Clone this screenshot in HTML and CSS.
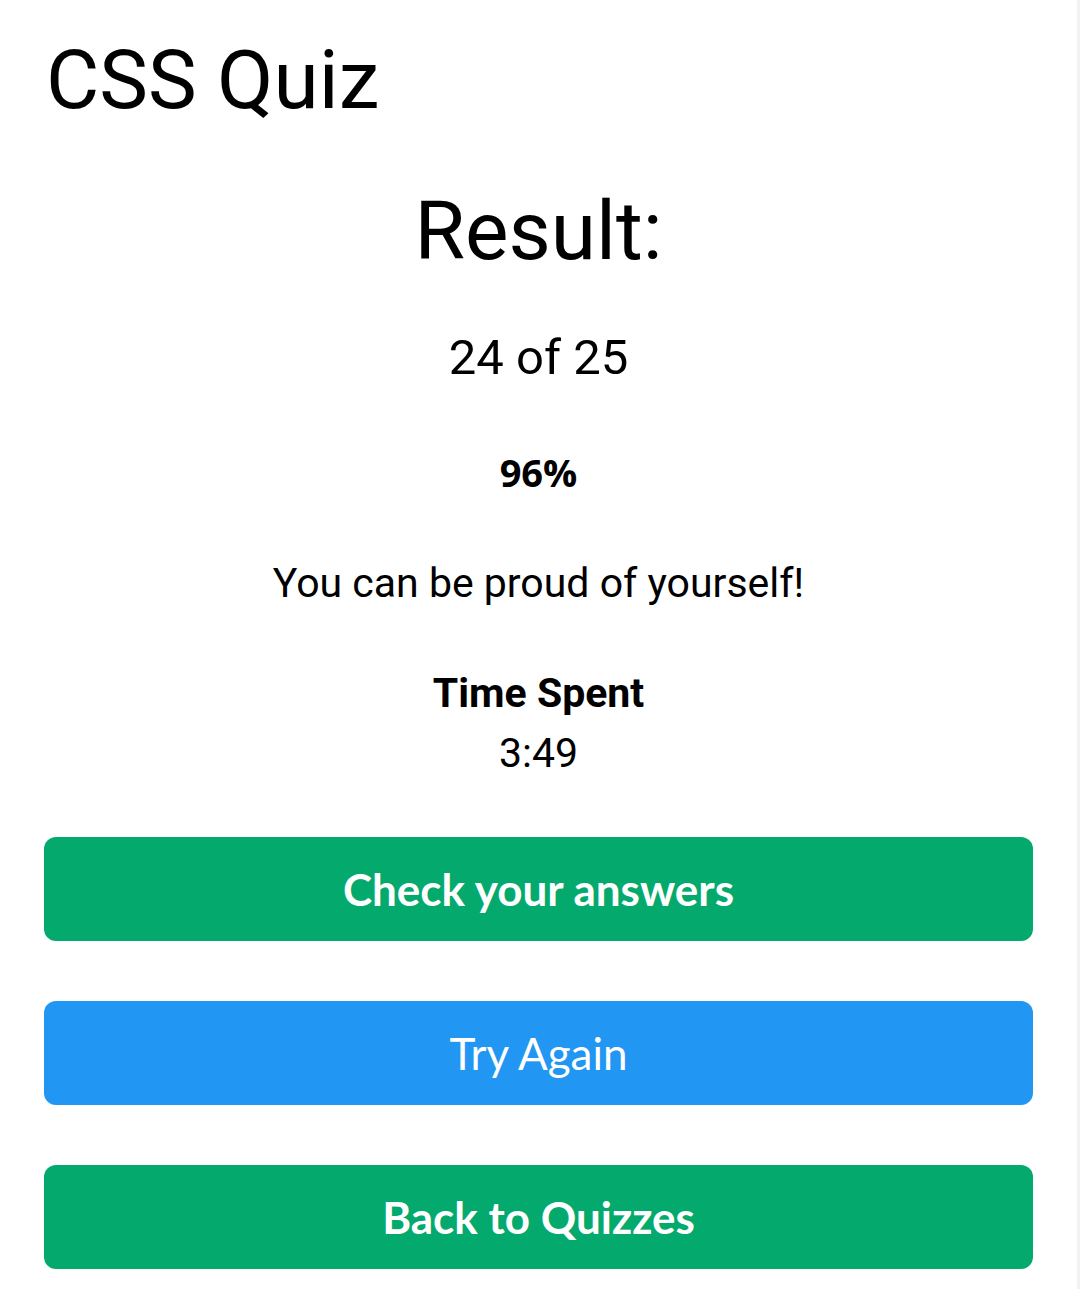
FILE: index.html
```html
<!DOCTYPE html>
<html lang="en">
  <head>
    <meta charset="UTF-8" />
    <meta name="viewport" content="width=device-width, initial-scale=1.0" />
    <title>CSS Quiz - Result</title>
    <link rel="stylesheet" href="styles.css">
  </head>
  <body>
    <main class="quiz">
      <h1 class="quiz-title">CSS Quiz</h1>

      <!-- Result summary -->
      <section class="result">
        <h2 class="result-heading">Result:</h2>
        <p class="result-score">24 of 25</p>
        <p class="result-percent">96%</p>
        <p class="result-message">You can be proud of yourself!</p>
        <p class="result-label">Time Spent</p>
        <p class="result-time">3:49</p>
      </section>

      <!-- Actions -->
      <div class="actions">
        <a href="#" class="btn btn-green btn-bold">Check your answers</a>
        <a href="#" class="btn btn-blue">Try Again</a>
        <a href="#" class="btn btn-green btn-bold">Back to Quizzes</a>
      </div>
    </main>
  </body>
</html>
```

FILE: styles.css
```css
* {
  margin: 0;
  padding: 0;
  box-sizing: border-box;
}

body {
  background-color: #fff;
  color: #000;
  font-family: Roboto, "Noto Sans", sans-serif;
  border-right: 3px solid #f2f2f2;
  min-height: 100vh;
}

.quiz {
  padding: 30px 44px 0 44px;
}

.quiz-title {
  font-size: 82px;
  font-weight: 400;
  line-height: 100px;
  padding-left: 2px;
}

/* Result summary */
.result {
  text-align: center;
}

.result-heading {
  font-size: 82px;
  font-weight: 400;
  line-height: 100px;
  margin-top: 51px;
}

.result-score {
  font-size: 49px;
  line-height: 60px;
  margin-top: 47px;
}

.result-percent {
  font-family: "Open Sans", sans-serif;
  font-weight: 700;
  font-size: 38px;
  line-height: 50px;
  margin-top: 59px;
}

.result-message {
  font-size: 41px;
  line-height: 50px;
  margin-top: 61px;
}

.result-label {
  font-weight: 700;
  font-size: 41px;
  line-height: 50px;
  margin-top: 60px;
}

.result-time {
  font-size: 41px;
  line-height: 50px;
  margin-top: 10px;
}

/* Actions */
.actions {
  display: flex;
  flex-direction: column;
  gap: 60px;
  margin-top: 59px;
}

.btn {
  display: flex;
  align-items: center;
  justify-content: center;
  height: 104px;
  border-radius: 12px;
  color: #fff;
  text-decoration: none;
  font-family: Lato, "Open Sans", sans-serif;
  font-size: 44px;
}

.btn-bold {
  font-weight: 700;
}

.btn-green {
  background-color: #04aa6d;
}

.btn-blue {
  background-color: #2196f3;
}
```
